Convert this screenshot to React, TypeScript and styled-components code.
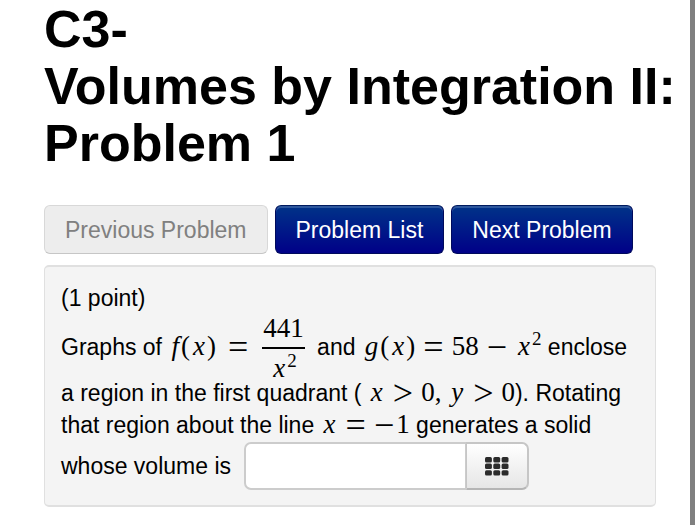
import React from "react";
import styled, { createGlobalStyle } from "styled-components";

const GlobalStyle = createGlobalStyle`
  *, *::before, *::after { box-sizing: border-box; }
  body {
    margin: 0;
    background: #fff;
    color: #000;
    font-family: "Liberation Sans", Arial, Helvetica, sans-serif;
    font-size: 23px;
    line-height: 32px;
  }
`;

const Page = styled.div`
  display: flex;
  min-height: 100vh;
  padding-right: 5px;
`;

const Content = styled.main`
  flex: 1;
  min-width: 0;
  padding: 1px 0 18px 44px;
  border-right: 5px solid #808080;
`;

const Title = styled.h1`
  margin: 0;
  font-size: 52px;
  font-weight: 700;
  line-height: 57px;
`;

const Nav = styled.nav`
  display: flex;
  flex-wrap: wrap;
  gap: 7px;
  margin: 33px 0 11px;
`;

const NavButton = styled.button`
  height: 49px;
  padding: 0 20px;
  border: 1px solid #000a5c;
  border-top-color: #001a5e;
  border-radius: 6px;
  background: linear-gradient(#003388, #000088);
  box-shadow: inset 0 2px 0 rgba(255, 255, 255, 0.18);
  color: #fff;
  font: inherit;

  &:disabled {
    border-color: #d8d8d8;
    border-bottom-color: #c6c6c6;
    background: #ededed;
    box-shadow: none;
    color: #808080;
  }
`;

const Panel = styled.section`
  margin-right: 34px;
  padding: 15px 14px 15px 16px;
  border: 1px solid #e0e0e0;
  border-top: 2px solid #e0e0e0;
  border-bottom: 2px solid #e0e0e0;
  border-radius: 5px;
  background: #f4f4f4;
`;

const Text = styled.p`
  margin: 0;
`;

const Formula = styled.span`
  font-family: "Liberation Serif", "Times New Roman", serif;
  font-size: 27px;
  line-height: 28px;
  white-space: nowrap;
`;

const Variable = styled.i`
  padding: 0 2px 0 3px;
`;

const Relation = styled.span`
  margin: 0 8px;
  font-size: 36px;
  line-height: 20px;
  vertical-align: -4px;
`;

const FractionRelation = styled(Relation)`
  margin: 0 6px 0 12px;
`;

const Negative = styled(Relation)`
  margin: 0 2px 0 0;
`;

const Power = styled.sup`
  font-size: 19px;
  line-height: 0;
  vertical-align: 10px;
`;

const Fraction = styled.span`
  display: inline-flex;
  flex-direction: column;
  margin: 3px 6px -7px 8px;
  text-align: center;
  vertical-align: 18px;
`;

const Numerator = styled.span`
  padding: 0 1px 8px;
  border-bottom: 2px solid #000;
  line-height: 22px;
`;

const Denominator = styled.span`
  padding-top: 3px;
  line-height: 32px;
`;

const AnswerRow = styled.div`
  display: flex;
  flex-wrap: wrap;
  align-items: center;
  gap: 13px;
  padding-top: 1px;
`;

const InputGroup = styled.div`
  display: flex;
  height: 48px;
`;

const AnswerInput = styled.input`
  width: 222px;
  padding: 0 12px;
  border: 2px solid #ccc;
  border-right-width: 1px;
  border-radius: 7px 0 0 7px;
  background: #fff;
  font: inherit;
`;

const KeypadButton = styled.button`
  display: flex;
  align-items: center;
  justify-content: center;
  width: 63px;
  padding: 0;
  border: 2px solid #c6c6c6;
  border-left-width: 1px;
  border-bottom-color: #b5b5b5;
  border-radius: 0 7px 7px 0;
  background: linear-gradient(#fff, #e6e6e6);
`;

const KeypadIcon = () => (
  <svg width="24" height="19" viewBox="0 0 24 19" fill="#2b2b2b" aria-hidden="true">
    {[0, 6.6, 13.2].map((y) =>
      [0, 8.3, 16.6].map((x) => (
        <rect key={`${x}-${y}`} x={x} y={y} width="6.9" height="5.4" rx="1.5" />
      ))
    )}
  </svg>
);

export default function App() {
  return (
    <>
      <GlobalStyle />
      <Page>
        <Content>
          <Title>
            C3-
            <br />
            Volumes by Integration II:
            <br />
            Problem 1
          </Title>
          <Nav aria-label="Problems">
            <NavButton type="button" disabled>Previous Problem</NavButton>
            <NavButton type="button">Problem List</NavButton>
            <NavButton type="button">Next Problem</NavButton>
          </Nav>
          <Panel>
            <Text>(1 point)</Text>
            <Text>
              Graphs of{" "}
              <Formula>
                <Variable>f</Variable>(<Variable>x</Variable>)
                <FractionRelation>=</FractionRelation>
                <Fraction>
                  <Numerator>441</Numerator>
                  <Denominator>
                    <Variable>x</Variable>
                    <Power>2</Power>
                  </Denominator>
                </Fraction>
              </Formula>{" "}
              and{" "}
              <Formula>
                <Variable>g</Variable>(<Variable>x</Variable>)<Relation>=</Relation>58
                <Relation>−</Relation>
                <Variable>x</Variable>
                <Power>2</Power>
              </Formula>{" "}
              enclose a region in the first quadrant ({" "}
              <Formula>
                <Variable>x</Variable>
                <Relation>&gt;</Relation>0, <Variable>y</Variable>
                <Relation>&gt;</Relation>0
              </Formula>
              ). Rotating that region about the line{" "}
              <Formula>
                <Variable>x</Variable>
                <Relation>=</Relation>
                <Negative>−</Negative>1
              </Formula>{" "}
              generates a solid
            </Text>
            <AnswerRow>
              <label htmlFor="volume">whose volume is</label>
              <InputGroup>
                <AnswerInput id="volume" type="text" />
                <KeypadButton type="button" aria-label="Open equation editor">
                  <KeypadIcon />
                </KeypadButton>
              </InputGroup>
            </AnswerRow>
          </Panel>
        </Content>
      </Page>
    </>
  );
}
